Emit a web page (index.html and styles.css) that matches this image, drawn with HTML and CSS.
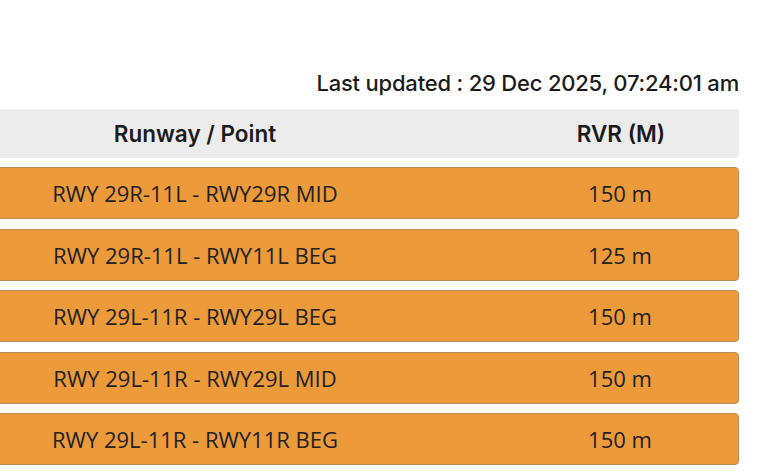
FILE: index.html
```html
<!DOCTYPE html>
<html>
<head>
<meta charset="utf-8">
<link rel="stylesheet" href="styles.css">
</head>
<body>
<div class="page">
  <div class="updated">Last updated : 29 Dec 2025, 07:24:01 am</div>
  <div class="table">
    <div class="head">
      <div class="cell">Runway / Point</div>
      <div class="cell">RVR (M)</div>
    </div>
    <div class="row">
      <div class="cell">RWY 29R-11L - RWY29R MID</div>
      <div class="cell">150 m</div>
    </div>
    <div class="row">
      <div class="cell">RWY 29R-11L - RWY11L BEG</div>
      <div class="cell">125 m</div>
    </div>
    <div class="row">
      <div class="cell">RWY 29L-11R - RWY29L BEG</div>
      <div class="cell">150 m</div>
    </div>
    <div class="row">
      <div class="cell">RWY 29L-11R - RWY29L MID</div>
      <div class="cell">150 m</div>
    </div>
    <div class="row">
      <div class="cell">RWY 29L-11R - RWY11R BEG</div>
      <div class="cell">150 m</div>
    </div>
  </div>
</div>
</body>
</html>
```

FILE: styles.css
```css
html, body {
  margin: 0;
  padding: 0;
  background: #ffffff;
  overflow: hidden;
}
.page {
  width: 852px;
  margin-left: -113px;
  padding-top: 68px;
}
.updated {
  font-family: "Inter", "Noto Sans", sans-serif;
  font-weight: 500;
  font-size: 22px;
  line-height: 30px;
  color: #1b1b1b;
  text-align: right;
  letter-spacing: -0.2px;
}
.table {
  margin-top: 11px;
  display: flex;
  flex-direction: column;
  gap: 9.5px;
}
.head, .row {
  display: grid;
  grid-template-columns: 1fr 236px;
  align-items: center;
  border-radius: 4px;
  box-sizing: border-box;
}
.head {
  height: 48.5px;
  background: #ececec;
  font-family: "Inter", "Noto Sans", sans-serif;
  font-weight: 600;
  font-size: 22.5px;
  color: #1b1b1b;
}
.row {
  height: 52px;
  background: #ec9a3a;
  border: 1px solid #b98d58;
  font-family: "Open Sans", sans-serif;
  font-size: 22px;
  color: #222222;
}
.cell {
  text-align: center;
}
```
